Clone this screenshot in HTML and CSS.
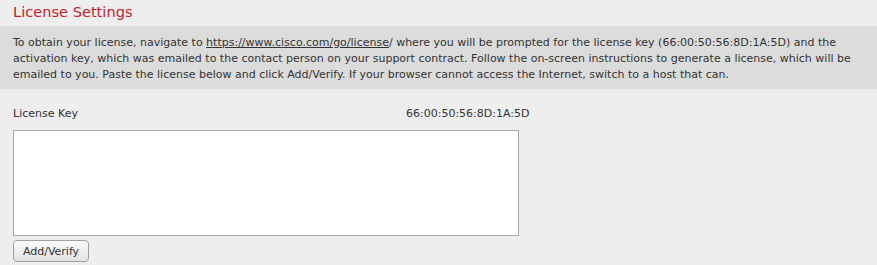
FILE: index.html
```html
<!DOCTYPE html>
<html lang="en">
<head>
    <meta charset="UTF-8">
    <title>License Settings</title>
    <link rel="stylesheet" href="styles.css">
</head>
<body>
    <div class="page">
        <h1 class="page-title">License Settings</h1>
        <div class="notice">
            To obtain your license, navigate to <a href="#">https://www.cisco.com/go/license</a>/ where you will be prompted for the license key (66:00:50:56:8D:1A:5D) and the activation key, which was emailed to the contact person on your support contract. Follow the on-screen instructions to generate a license, which will be emailed to you. Paste the license below and click Add/Verify. If your browser cannot access the Internet, switch to a host that can.
        </div>
        <div class="form">
            <div class="field-row">
                <span class="field-label">License Key</span>
                <span class="field-value">66:00:50:56:8D:1A:5D</span>
            </div>
            <textarea class="license-input"></textarea>
            <button class="btn">Add/Verify</button>
        </div>
    </div>
</body>
</html>
```

FILE: styles.css
```css
* {
    margin: 0;
    padding: 0;
    box-sizing: border-box;
}

body {
    background-color: #eeeeee;
    color: #333;
    font-family: "DejaVu Sans", Verdana, sans-serif;
    font-size: 11px;
}

.page-title {
    font-size: 14.6px;
    font-weight: normal;
    color: #c8202b;
    padding: 1px 13px 0;
    height: 26px;
    line-height: 21px;
}

.notice {
    background: #dcdcdc;
    padding: 9px 14px 0 13px;
    height: 63px;
    line-height: 16px;
}

.notice a {
    color: #333;
}

.form {
    padding: 17px 13px 0;
    display: flex;
    flex-direction: column;
    align-items: flex-start;
}

.field-row {
    display: flex;
    line-height: 16px;
    height: 24px;
}

.field-label {
    width: 393px;
}

.license-input {
    width: 506px;
    height: 106px;
    border: 1px solid #a9a9a9;
    background: #fff;
    resize: none;
}

.btn {
    margin-top: 4px;
    width: 76px;
    height: 22px;
    font-family: inherit;
    font-size: 11px;
    color: #333;
    border: 1px solid #a0a0a0;
    border-radius: 4px;
    background: linear-gradient(#fbfbfb, #e2e2e2);
}
```
